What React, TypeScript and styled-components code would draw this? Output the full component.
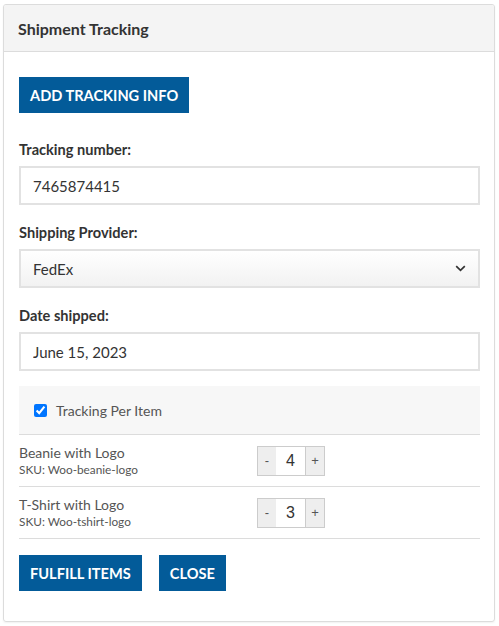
import React from 'react';
import styled, { createGlobalStyle } from 'styled-components';

const GlobalStyle = createGlobalStyle`
	body {
		margin: 0;
		font-family: Lato, 'Liberation Sans', sans-serif;
		background: #fff;
		color: #333;
	}
`;

const items = [
	{ name: 'Beanie with Logo', sku: 'Woo-beanie-logo', qty: 4 },
	{ name: 'T-Shirt with Logo', sku: 'Woo-tshirt-logo', qty: 3 },
];

const App: React.FC = () => {
	return (
		<>
			<GlobalStyle />
			<Card>
				<Header>Shipment Tracking</Header>
				<Body>
					<Button>Add Tracking Info</Button>
					<Field $first>
						<Label>Tracking number:</Label>
						<Input defaultValue='7465874415' />
					</Field>
					<Field>
						<Label>Shipping Provider:</Label>
						<SelectBox>
							<span>FedEx</span>
							<svg width='11' height='7' viewBox='0 0 11 7'>
								<path d='M1.2 1.2 L5.5 5.4 L9.8 1.2' fill='none' stroke='#333' strokeWidth='1.7' />
							</svg>
						</SelectBox>
					</Field>
					<Field>
						<Label>Date shipped:</Label>
						<Input defaultValue='June 15, 2023' />
					</Field>
					<PerItemBox>
						<Checkbox type='checkbox' defaultChecked />
						<span>Tracking Per Item</span>
					</PerItemBox>
					{items.map((item) => (
						<ItemRow key={item.sku}>
							<ItemInfo>
								<ItemName>{item.name}</ItemName>
								<ItemSku>SKU: {item.sku}</ItemSku>
							</ItemInfo>
							<Qty>
								<QtyBtn>-</QtyBtn>
								<QtyValue>{item.qty}</QtyValue>
								<QtyBtn>+</QtyBtn>
							</Qty>
						</ItemRow>
					))}
					<Actions>
						<Button>Fulfill Items</Button>
						<Button>Close</Button>
					</Actions>
				</Body>
			</Card>
		</>
	);
};

const Card = styled.div`
	margin: 4px 4px 4px 3px;
	border: 1px solid #dcdcdc;
	border-radius: 3px;
	box-shadow: 0 1px 2px rgba(0, 0, 0, 0.06);
	overflow: hidden;
`;

const Header = styled.div`
	height: 46px;
	display: flex;
	align-items: center;
	padding-left: 14px;
	background: #f4f4f4;
	border-bottom: 1px solid #dcdcdc;
	font-size: 16px;
	font-weight: 700;
	color: #333;
`;

const Body = styled.div`
	padding: 25px 14px 30px 15px;
`;

const Button = styled.button`
	height: 36px;
	padding: 0 11px;
	border: none;
	border-radius: 0;
	background: #035b99;
	color: #fff;
	font-family: Lato, 'Liberation Sans', sans-serif;
	font-size: 14.6px;
	font-weight: 700;
	text-transform: uppercase;
	cursor: pointer;
`;

const Field = styled.div<{ $first?: boolean }>`
	margin-top: ${(p) => (p.$first ? '27px' : '18px')};
`;

const Label = styled.div`
	font-size: 14.6px;
	font-weight: 700;
	line-height: 20px;
	margin-bottom: 6px;
	color: #333;
`;

const Input = styled.input`
	box-sizing: border-box;
	display: block;
	width: 100%;
	height: 39px;
	padding: 0 12px;
	border: 2px solid #e2e2e2;
	background: #fff;
	font-family: Lato, 'Liberation Sans', sans-serif;
	font-size: 15px;
	color: #333;
	outline: none;
`;

const SelectBox = styled.div`
	box-sizing: border-box;
	height: 39px;
	display: flex;
	align-items: center;
	justify-content: space-between;
	padding: 0 12px 0 12px;
	border: 2px solid #e2e2e2;
	background: linear-gradient(#ffffff, #f2f2f2);
	font-size: 15px;
	color: #333;
`;

const PerItemBox = styled.label`
	margin-top: 15px;
	height: 48px;
	display: flex;
	align-items: center;
	gap: 9px;
	padding-left: 15px;
	background: #f7f7f7;
	border-bottom: 1px solid #dcdcdc;
	font-size: 14px;
	color: #555;
`;

const Checkbox = styled.input`
	width: 13px;
	height: 13px;
	margin: 0;
	accent-color: #0075ff;
`;

const ItemRow = styled.div`
	height: 51px;
	display: grid;
	grid-template-columns: 238px 1fr;
	align-items: center;
	border-bottom: 1px solid #dcdcdc;
`;

const ItemInfo = styled.div`
	display: flex;
	flex-direction: column;
	gap: 2px;
`;

const ItemName = styled.div`
	font-size: 14px;
	color: #555;
	line-height: 17px;
`;

const ItemSku = styled.div`
	font-size: 11.8px;
	color: #555;
	line-height: 14px;
`;

const Qty = styled.div`
	display: flex;
	width: 68px;
	height: 30px;
	box-sizing: border-box;
	border: 1px solid #ccc;
`;

const QtyBtn = styled.span`
	width: 18px;
	display: flex;
	align-items: center;
	justify-content: center;
	background: #eee;
	color: #555;
	font-size: 13px;
	font-family: 'Liberation Sans', sans-serif;
`;

const QtyValue = styled.span`
	flex: 1;
	display: flex;
	align-items: center;
	justify-content: center;
	background: #fff;
	border-right: 1px solid #ccc;
	color: #333;
	font-size: 16px;
	font-family: 'Liberation Sans', sans-serif;
`;

const Actions = styled.div`
	display: flex;
	gap: 17px;
	margin-top: 16px;
`;

export default App;
